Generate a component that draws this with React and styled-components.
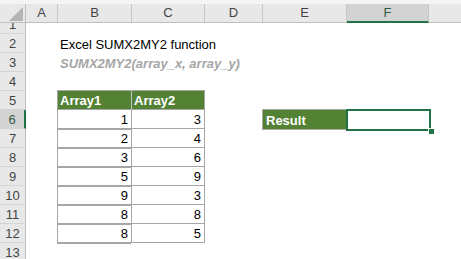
import React from 'react';
import styled, { createGlobalStyle } from 'styled-components';

const GREEN = '#548235';
const SEL = '#217346';
const LINE = '#a6a6a6';
const HEAD_BG = '#e8e8e8';
const HEAD_SEL_BG = '#d3d3d3';

const GlobalStyle = createGlobalStyle`
  html, body { margin: 0; padding: 0; background: #fff; overflow: hidden; }
  #root { width: 461px; height: 259px; overflow: hidden; }
`;

const Sheet = styled.div`
  display: grid;
  grid-template-columns: 26px 32px 74px 73px 58px 84px 82px 80px;
  grid-template-rows: 4px 19px 11px repeat(12, 19px);
  width: 461px;
  height: 259px;
  overflow: hidden;
  font-family: "Liberation Sans", Arial, sans-serif;
  font-size: 13px;
  color: #000;
  background: #fff;
`;

const TopStrip = styled.div`
  grid-column: 1 / -1;
  background: #f4f4f4;
`;

const Corner = styled.div`
  box-sizing: border-box;
  background: ${HEAD_BG};
  border-right: 1px solid #bfbfbf;
  border-bottom: 1px solid #bfbfbf;
  display: flex;
  align-items: flex-end;
  justify-content: flex-end;
  padding: 0 2px 1px 0;
`;

const ColHeader = styled.div`
  box-sizing: border-box;
  display: flex;
  align-items: center;
  justify-content: center;
  line-height: 14px;
  background: ${(p) => (p.$selected ? HEAD_SEL_BG : HEAD_BG)};
  color: ${(p) => (p.$selected ? '#2f5d43' : '#444')};
  border-right: 1px solid #c6c6c6;
  border-bottom: ${(p) => (p.$selected ? `2px solid ${SEL}` : '1px solid #bfbfbf')};
`;

const RowHeader = styled.div`
  box-sizing: border-box;
  overflow: hidden;
  display: flex;
  align-items: flex-end;
  justify-content: center;
  line-height: 16px;
  background: ${(p) => (p.$selected ? HEAD_SEL_BG : HEAD_BG)};
  color: ${(p) => (p.$selected ? '#2f5d43' : '#444')};
  border-right: ${(p) => (p.$selected ? `2px solid ${SEL}` : '1px solid #bfbfbf')};
  border-bottom: 1px solid #d4d4d4;
`;

const Cell = styled.div`
  box-sizing: border-box;
  position: relative;
  min-width: 0;
  display: flex;
  align-items: flex-end;
  line-height: 16px;
  white-space: nowrap;
`;

const Title = styled.span`
  padding-left: 2px;
  color: #000;
`;

const Syntax = styled.span`
  padding-left: 2px;
  color: #a6a6a6;
  font-weight: bold;
  font-style: italic;
`;

const TableHead = styled(Cell)`
  background: ${GREEN};
  color: #fff;
  font-weight: bold;
  padding-left: 2px;
  border-right: 1px solid ${(p) => (p.$first ? '#c4c4c4' : LINE)};
  border-bottom: 1px solid ${LINE};
  box-shadow: 0 -1px 0 ${LINE}${(p) => (p.$first ? `, -1px 0 0 ${LINE}, -1px -1px 0 ${LINE}` : '')};
`;

const TableCell = styled(Cell)`
  justify-content: flex-end;
  padding-right: 3px;
  border-right: 1px solid ${LINE};
  border-bottom: 1px solid ${LINE};
  box-shadow: ${(p) => (p.$first ? `-1px 0 0 ${LINE}, -1px 1px 0 ${LINE}` : 'none')};
`;

const ResultLabel = styled(Cell)`
  background: ${GREEN};
  color: #fff;
  font-weight: bold;
  padding-left: 3px;
  outline: 1px solid #a9a9a9;
`;

const SelectionBox = styled.div`
  position: absolute;
  top: -1px;
  left: -1px;
  right: -2px;
  bottom: -2px;
  border: 2px solid ${SEL};
  pointer-events: none;
`;

const FillHandle = styled.div`
  position: absolute;
  right: -5px;
  bottom: -5px;
  width: 5px;
  height: 5px;
  background: ${SEL};
  box-shadow: 0 0 0 1px #fff;
`;

const COLS = ['A', 'B', 'C', 'D', 'E', 'F', 'G'];
const VISIBLE_LABELS = ['A', 'B', 'C', 'D', 'E', 'F'];
const NUMBERS = [
  [1, 3],
  [2, 4],
  [3, 6],
  [5, 9],
  [9, 3],
  [8, 8],
  [8, 5],
];

function renderCell(c, r) {
  if (c === 'B' && r === 2) {
    return (
      <Cell>
        <Title>Excel SUMX2MY2 function</Title>
      </Cell>
    );
  }
  if (c === 'B' && r === 3) {
    return (
      <Cell>
        <Syntax>SUMX2MY2(array_x, array_y)</Syntax>
      </Cell>
    );
  }
  if (r === 5 && (c === 'B' || c === 'C')) {
    return <TableHead $first={c === 'B'}>{c === 'B' ? 'Array1' : 'Array2'}</TableHead>;
  }
  if (r >= 6 && r <= 12 && (c === 'B' || c === 'C')) {
    const v = NUMBERS[r - 6][c === 'B' ? 0 : 1];
    return <TableCell $first={c === 'B'}>{v}</TableCell>;
  }
  if (c === 'E' && r === 6) {
    return <ResultLabel>Result</ResultLabel>;
  }
  if (c === 'F' && r === 6) {
    return (
      <Cell>
        <SelectionBox>
          <FillHandle />
        </SelectionBox>
      </Cell>
    );
  }
  return <Cell />;
}

export default function App() {
  const body = [];
  for (let r = 1; r <= 13; r++) {
    body.push(
      <RowHeader key={`rh${r}`} $selected={r === 6}>
        {r}
      </RowHeader>
    );
    COLS.forEach((c) => {
      body.push(<React.Fragment key={`${c}${r}`}>{renderCell(c, r)}</React.Fragment>);
    });
  }

  return (
    <>
      <GlobalStyle />
      <Sheet>
        <TopStrip />
        <Corner>
          <svg width="14" height="14" viewBox="0 0 14 14">
            <polygon points="14,0 14,14 0,14" fill="#b4b4b4" />
          </svg>
        </Corner>
        {COLS.map((c) => (
          <ColHeader key={c} $selected={c === 'F'}>
            {VISIBLE_LABELS.includes(c) ? c : null}
          </ColHeader>
        ))}
        {body}
      </Sheet>
    </>
  );
}
